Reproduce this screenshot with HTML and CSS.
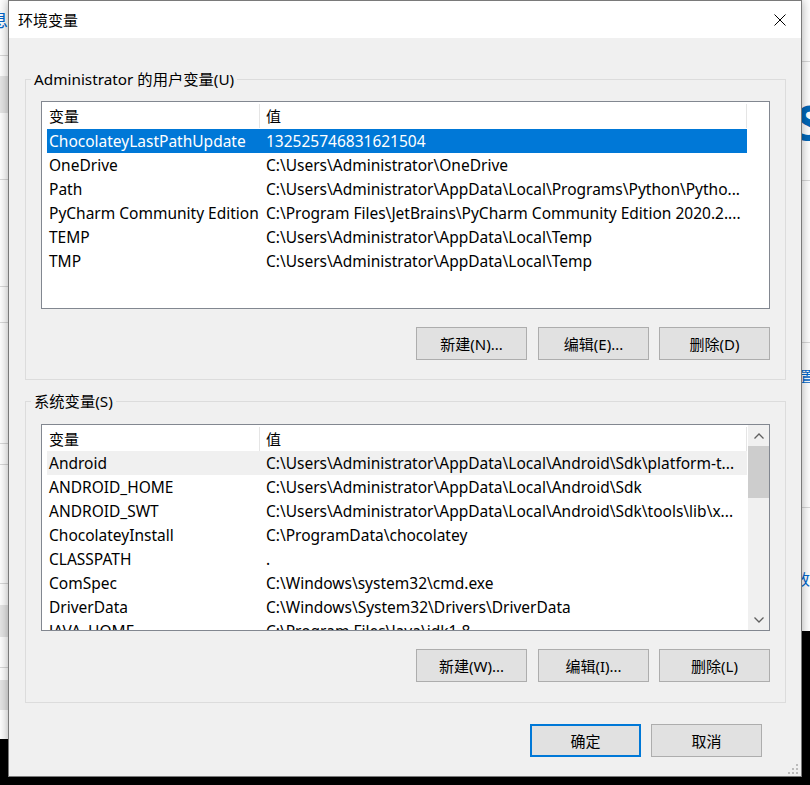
FILE: index.html
```html
<!DOCTYPE html>
<html lang="zh-CN">
<head>
    <meta charset="UTF-8">
    <title>环境变量</title>
    <link rel="stylesheet" href="styles.css">
</head>
<body>

<!-- Windows behind the dialog -->
<div class="backdrop backdrop-left">
    <div class="bd-row bd-top"><span class="bd-link">系统信息</span></div>
    <div class="bd-row" style="height:20px"></div>
    <div class="bd-row bd-band" style="height:37px"></div>
    <div class="bd-row bd-line" style="height:67px"></div>
    <div class="bd-row bd-line" style="height:107px"></div>
    <div class="bd-row bd-line" style="height:36px"></div>
    <div class="bd-row bd-line" style="height:121px"></div>
    <div class="bd-row bd-line" style="height:21px"></div>
    <div class="bd-row bd-line" style="height:119px"></div>
    <div class="bd-row" style="height:21px"></div>
    <div class="bd-row bd-band" style="height:32px"></div>
    <div class="bd-row bd-line" style="height:31px"></div>
    <div class="bd-row" style="height:12px"></div>
    <div class="bd-row bd-band" style="height:30px"></div>
</div>

<div class="backdrop backdrop-right">
    <div class="bd-row bd-line" style="height:62px"></div>
    <div class="bd-row bd-line bd-big" style="height:119px"><span>S</span></div>
    <div class="bd-row bd-line" style="height:162px"></div>
    <div class="bd-row bd-line bd-setting" style="height:165px"><span class="bd-link">高级系统设置</span></div>
    <div class="bd-row bd-key"><span class="bd-link">更改产品密钥</span></div>
</div>

<!-- Environment variables dialog -->
<div class="dialog">
    <div class="titlebar">
        <span class="title">环境变量</span>
        <div class="close">
            <svg width="12" height="12" viewBox="0 0 12 12">
                <path d="M0.5 0.5 L11.5 11.5 M11.5 0.5 L0.5 11.5" stroke="#000" stroke-width="1" fill="none"/>
            </svg>
        </div>
    </div>

    <div class="dialog-body">
        <fieldset class="group group-user">
            <legend>Administrator 的用户变量(U)</legend>
            <div class="list list-user">
                <div class="list-main">
                    <div class="list-head">
                        <div class="head-name">变量</div>
                        <div class="head-value">值</div>
                    </div>
                    <div class="list-rows">
                        <div class="row selected"><div class="name">ChocolateyLastPathUpdate</div><div class="value">132525746831621504</div></div>
                        <div class="row"><div class="name">OneDrive</div><div class="value">C:\Users\Administrator\OneDrive</div></div>
                        <div class="row"><div class="name">Path</div><div class="value">C:\Users\Administrator\AppData\Local\Programs\Python\Pytho...</div></div>
                        <div class="row"><div class="name">PyCharm Community Edition</div><div class="value">C:\Program Files\JetBrains\PyCharm Community Edition 2020.2....</div></div>
                        <div class="row"><div class="name">TEMP</div><div class="value">C:\Users\Administrator\AppData\Local\Temp</div></div>
                        <div class="row"><div class="name">TMP</div><div class="value">C:\Users\Administrator\AppData\Local\Temp</div></div>
                    </div>
                </div>
            </div>
            <div class="btn-row">
                <button class="btn">新建(N)...</button>
                <button class="btn">编辑(E)...</button>
                <button class="btn">删除(D)</button>
            </div>
        </fieldset>

        <fieldset class="group group-system">
            <legend>系统变量(S)</legend>
            <div class="list list-system">
                <div class="list-main">
                    <div class="list-head">
                        <div class="head-name">变量</div>
                        <div class="head-value">值</div>
                    </div>
                    <div class="list-rows">
                        <div class="row current"><div class="name">Android</div><div class="value">C:\Users\Administrator\AppData\Local\Android\Sdk\platform-t...</div></div>
                        <div class="row"><div class="name">ANDROID_HOME</div><div class="value">C:\Users\Administrator\AppData\Local\Android\Sdk</div></div>
                        <div class="row"><div class="name">ANDROID_SWT</div><div class="value">C:\Users\Administrator\AppData\Local\Android\Sdk\tools\lib\x...</div></div>
                        <div class="row"><div class="name">ChocolateyInstall</div><div class="value">C:\ProgramData\chocolatey</div></div>
                        <div class="row"><div class="name">CLASSPATH</div><div class="value">.</div></div>
                        <div class="row"><div class="name">ComSpec</div><div class="value">C:\Windows\system32\cmd.exe</div></div>
                        <div class="row"><div class="name">DriverData</div><div class="value">C:\Windows\System32\Drivers\DriverData</div></div>
                        <div class="row"><div class="name">JAVA_HOME</div><div class="value">C:\Program Files\Java\jdk1.8</div></div>
                    </div>
                </div>
                <div class="scrollbar">
                    <div class="scroll-btn">
                        <svg width="10" height="6" viewBox="0 0 10 6"><path d="M0.5 5.5 L5 1 L9.5 5.5" stroke="#606060" stroke-width="1.3" fill="none"/></svg>
                    </div>
                    <div class="scroll-thumb"></div>
                    <div class="scroll-track"></div>
                    <div class="scroll-btn">
                        <svg width="10" height="6" viewBox="0 0 10 6"><path d="M0.5 0.5 L5 5 L9.5 0.5" stroke="#606060" stroke-width="1.3" fill="none"/></svg>
                    </div>
                </div>
            </div>
            <div class="btn-row">
                <button class="btn">新建(W)...</button>
                <button class="btn">编辑(I)...</button>
                <button class="btn">删除(L)</button>
            </div>
        </fieldset>

        <div class="dialog-actions">
            <button class="btn btn-default">确定</button>
            <button class="btn">取消</button>
        </div>
    </div>

    <!-- size grip -->
    <svg class="grip" width="12" height="12" viewBox="0 0 12 12">
        <rect x="9" y="1" width="2" height="2"/>
        <rect x="5" y="5" width="2" height="2"/>
        <rect x="9" y="5" width="2" height="2"/>
        <rect x="1" y="9" width="2" height="2"/>
        <rect x="5" y="9" width="2" height="2"/>
        <rect x="9" y="9" width="2" height="2"/>
    </svg>
</div>

</body>
</html>
```

FILE: styles.css
```css
/* Basic Reset */
* {
    margin: 0;
    padding: 0;
    box-sizing: border-box;
}

body {
    width: 810px;
    height: 785px;
    position: relative;
    overflow: hidden;
    background-color: #000;
    font-family: "Noto Sans", "Noto Sans CJK SC", sans-serif;
    font-size: 15px;
    color: #000;
}

/* Background windows */
.backdrop {
    position: absolute;
    top: 0;
    background-color: #fff;
    overflow: hidden;
}

.backdrop-left {
    left: -292px;
    width: 300px;
    height: 739px;
}

.backdrop-right {
    left: 700px;
    width: 300px;
    height: 631px;
}

.bd-row {
    width: 100%;
    overflow: hidden;
}

.bd-line {
    border-bottom: 1px solid #d9d9d9;
}

.bd-band {
    background-color: #e6e6e6;
}

.bd-top {
    height: 56px;
    padding-top: 8px;
    text-align: right;
    border-bottom: 1px solid #d9d9d9;
}

.bd-link {
    font-family: "Noto Sans CJK SC", sans-serif;
    color: #0066cc;
    font-size: 15px;
}

.bd-top .bd-link {
    font-size: 18px;
    line-height: 22px;
}

.bd-big span {
    display: block;
    padding: 36px 0 0 96px;
    font-family: "Noto Sans", sans-serif;
    font-size: 48px;
    line-height: 50px;
    font-weight: bold;
    color: #0067b8;
}

.bd-setting .bd-link {
    display: block;
    padding: 22px 0 0 25px;
}

.bd-key {
    padding: 60px 0 0 80px;
}

/* Dialog window */
.dialog {
    position: absolute;
    left: 8px;
    top: 0;
    width: 794px;
    height: 777px;
    background-color: #f0f0f0;
    border: 1px solid #7a7a7a;
    box-shadow: 0 0 10px rgba(0, 0, 0, 0.35);
    display: flex;
    flex-direction: column;
}

.titlebar {
    height: 37px;
    background-color: #fff;
    display: flex;
    align-items: center;
    justify-content: space-between;
    padding-left: 9px;
}

.title {
    font-family: "Noto Sans CJK SC", sans-serif;
    font-size: 15px;
    line-height: 20px;
}

.close {
    width: 42px;
    height: 37px;
    display: flex;
    align-items: center;
    justify-content: center;
}

.close svg {
    display: block;
}

.dialog-body {
    padding: 31px 15px 0 16px;
}

/* Group boxes */
.group {
    border: 1px solid #dcdcdc;
    padding: 12px 15px 19px;
    min-width: 0;
}

.group legend {
    padding: 0 3px;
    margin-left: -10px;
    line-height: 20px;
    font-size: 15.3px;
}

.group-system {
    margin-top: 11px;
    padding: 13px 15px 20px;
}

/* List views */
.list {
    height: 208px;
    border: 1px solid #828790;
    background-color: #fff;
    display: flex;
    overflow: hidden;
}

.list-system {
    height: 207px;
}

.list-main {
    flex: 1;
    overflow: hidden;
}

.list-head {
    display: flex;
    height: 26px;
    line-height: 24px;
    padding-top: 2px;
}

.head-name {
    width: 218px;
    padding-left: 7px;
    border-right: 1px solid #e5e5e5;
}

.head-value {
    width: 487px;
    padding-left: 6px;
    border-right: 1px solid #e5e5e5;
}

.list-rows {
    padding: 1px 0 0 5px;
}

.list-system .list-rows {
    padding-top: 0;
}

.row {
    display: flex;
    width: 700px;
    height: 24px;
    line-height: 24px;
    font-size: 15.5px;
    white-space: nowrap;
}

.row .name {
    width: 213px;
    padding-left: 2px;
    overflow: hidden;
}

.row .value {
    width: 487px;
    padding-left: 6px;
    overflow: hidden;
}

.row.selected {
    background-color: #0078d7;
    color: #fff;
}

.row.current {
    background-color: #f0f0f0;
}

/* Scrollbar */
.scrollbar {
    width: 21px;
    background-color: #f0f0f0;
    display: flex;
    flex-direction: column;
}

.scroll-btn {
    height: 21px;
    display: flex;
    align-items: center;
    justify-content: center;
}

.scroll-btn svg {
    display: block;
}

.scroll-thumb {
    height: 52px;
    background-color: #cdcdcd;
}

.scroll-track {
    flex: 1;
}

/* Buttons */
.btn-row {
    display: flex;
    justify-content: flex-end;
    gap: 10px;
    margin-top: 18px;
}

.btn-row .btn:first-child {
    margin-right: 1px;
}

.btn {
    width: 111px;
    height: 33px;
    background-color: #e1e1e1;
    border: 1px solid #adadad;
    font-family: "Noto Sans", "Noto Sans CJK SC", sans-serif;
    font-size: 15px;
    color: #000;
}

.btn-default {
    border: 2px solid #0078d7;
}

.dialog-actions {
    display: flex;
    justify-content: flex-end;
    gap: 10px;
    margin-top: 21px;
    padding-right: 24px;
}

.grip {
    position: absolute;
    right: 2px;
    bottom: 1px;
    fill: #bcbcbc;
}
```
